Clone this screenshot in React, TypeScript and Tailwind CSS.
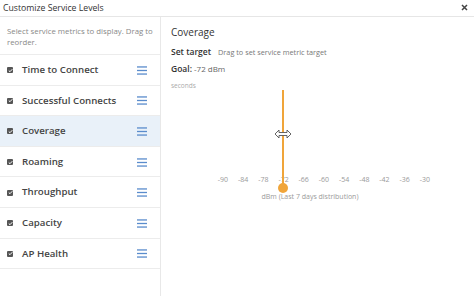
import React from "react";

const items = [
  "Time to Connect",
  "Successful Connects",
  "Coverage",
  "Roaming",
  "Throughput",
  "Capacity",
  "AP Health",
];

const ticks = [-90, -84, -78, -72, -66, -60, -54, -48, -42, -36, -30];

function Check() {
  return (
    <span className="flex h-[6px] w-[6px] shrink-0 items-center justify-center rounded-[1px] bg-[#555]">
      <svg width="5" height="5" viewBox="0 0 5 5">
        <path d="M0.8 2.6 L2 3.7 L4.3 1.2" fill="none" stroke="#fff" strokeWidth="1" />
      </svg>
    </span>
  );
}

function Burger() {
  return (
    <svg width="10" height="9" viewBox="0 0 10 9">
      <rect x="0" y="0.3" width="10" height="1.3" fill="#5a8ccc" />
      <rect x="0" y="3.85" width="10" height="1.3" fill="#5a8ccc" />
      <rect x="0" y="7.4" width="10" height="1.3" fill="#5a8ccc" />
    </svg>
  );
}

export default function App() {
  return (
    <div
      className="flex h-[298px] w-[474px] flex-col bg-white text-[#333]"
      style={{ fontFamily: '"Open Sans", sans-serif' }}
    >
      <div className="flex h-[17px] shrink-0 items-center justify-between border-b border-[#e6e6e6] pl-[3px] pr-[6px]">
        <span className="text-[8.7px] font-medium leading-none text-[#333]">Customize Service Levels</span>
        <svg width="7" height="7" viewBox="0 0 7 7" className="mt-[-2px]">
          <path d="M1 1 L6 6 M6 1 L1 6" stroke="#444" strokeWidth="1.5" />
        </svg>
      </div>
      <div className="flex h-[279px] shrink-0">
        <div className="flex w-[161px] shrink-0 flex-col border-r border-[#e8e8e8]">
          <div className="h-[38px] border-b border-[#ececec] px-[7px] pt-[9px] text-[7.8px] leading-[11px] text-[#888]">
            Select service metrics to display. Drag to reorder.
          </div>
          {items.map((t) => (
            <div
              key={t}
              className={`flex h-[30.6px] items-center border-b border-[#ececec] pl-[7px] pr-[13px] pt-[1px] ${
                t === "Coverage" ? "bg-[#e9f1f9]" : ""
              }`}
            >
              <Check />
              <span className="ml-[9px] flex-1 text-[9.7px] font-semibold text-[#444]">{t}</span>
              <Burger />
            </div>
          ))}
        </div>
        <div className="flex flex-1 flex-col pl-[10px] pt-[9px]">
          <div className="text-[10px] leading-[13px] text-[#333]">Coverage</div>
          <div className="mt-[7px] flex items-baseline leading-[12px]">
            <span className="text-[8.5px] font-semibold text-[#333]">Set target</span>
            <span className="ml-[7px] text-[7.3px] text-[#777]">Drag to set service metric target</span>
          </div>
          <div className="mt-[5px] flex items-baseline leading-[12px]">
            <span className="text-[8.5px] font-semibold text-[#333]">Goal:</span>
            <span className="ml-[2px] text-[8px] text-[#666]">-72 dBm</span>
          </div>
          <div className="mt-[6px] text-[6.5px] leading-[9px] text-[#aaa]">seconds</div>
          <div className="relative ml-[52px] h-[120px] w-[220px]">
            <div className="absolute left-[-7px] top-[85px] flex w-[216px] justify-between text-[7px] leading-[10px] text-[#9a9a9a]">
              {ticks.map((n) => (
                <span key={n} className="w-[14px] text-center">{n}</span>
              ))}
            </div>
            <div className="absolute left-[20px] top-[102px] w-[134px] text-center text-[7px] leading-[10px] text-[#9a9a9a]">
              dBm (Last 7 days distribution)
            </div>
            <div className="absolute left-[59px] top-0 h-[98px] w-[2px] bg-[#f0a53a]" />
            <div className="absolute left-[55px] top-[93px] h-[10px] w-[10px] rounded-full bg-[#f0a53a]" />
            <svg
              className="absolute left-[51px] top-[39px]"
              width="18"
              height="10"
              viewBox="0 0 18 10"
            >
              <path
                d="M1 5 L5 1 L5 3.5 L13 3.5 L13 1 L17 5 L13 9 L13 6.5 L5 6.5 L5 9 Z"
                fill="#fff"
                stroke="#555"
                strokeWidth="0.9"
                strokeLinejoin="round"
              />
            </svg>
          </div>
        </div>
      </div>
    </div>
  );
}
